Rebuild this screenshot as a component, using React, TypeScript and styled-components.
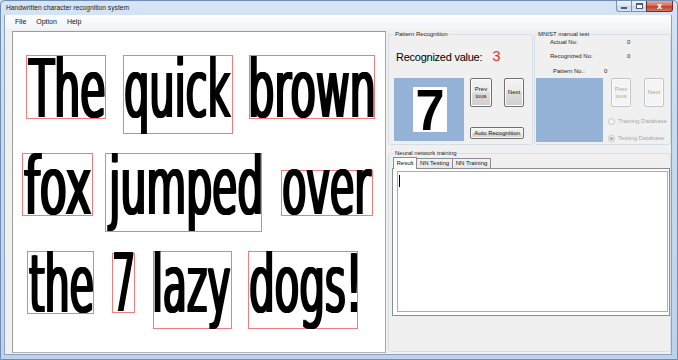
import React, { useLayoutEffect, useState } from "react";
import styled, { createGlobalStyle, css } from "styled-components";

const GlobalStyle = createGlobalStyle`
  html, body { margin: 0; padding: 0; background: #c9dbef; }
  body { font-family: "Liberation Sans", Arial, sans-serif; }
  * { box-sizing: border-box; }
`;

const Window = styled.div`
  width: 678px;
  height: 360px;
  display: flex;
  flex-direction: column;
  background: linear-gradient(180deg, #d6e4f4 0%, #c9dbef 30%, #bed2ea 100%);
  border: 1px solid #6f8db3;
  border-radius: 5px 5px 0 0;
  overflow: hidden;
`;

const TitleBar = styled.div`
  height: 14px;
  flex: none;
  display: flex;
  align-items: flex-start;
  padding-left: 5px;
`;

const TitleText = styled.span`
  font-size: 6.7px;
  line-height: 14px;
  color: #1b1b1b;
  white-space: nowrap;
`;

const Controls = styled.div`
  margin-left: auto;
  margin-right: 4px;
  display: flex;
  height: 11px;
`;

const CaptionButton = styled.div<{ $kind: "min" | "max" | "close" }>`
  height: 11px;
  display: flex;
  align-items: center;
  justify-content: center;
  border: 1px solid #8094b2;
  border-top: none;
  ${(p) =>
    p.$kind === "close"
      ? css`
          width: 27px;
          border-color: #7b2c20;
          border-radius: 0 0 3px 0;
          background: linear-gradient(180deg, #e7a79b 0%, #d27060 45%, #c0412c 55%, #d07a62 100%);
          color: #fff;
          font: bold 8px/9px "DejaVu Sans", sans-serif;
        `
      : css`
          width: 15px;
          border-right: none;
          border-radius: ${p.$kind === "min" ? "0 0 0 3px" : "0"};
          background: linear-gradient(180deg, #eef3f9 0%, #dbe5f1 45%, #c9d8ea 55%, #d8e4f1 100%);
        `}
`;

const MinGlyph = styled.span`
  width: 6px;
  height: 2px;
  margin-top: 4px;
  background: #fff;
  border: 1px solid #4b5d78;
`;

const MaxGlyph = styled.span`
  width: 7px;
  height: 6px;
  border: 1px solid #4b5d78;
  border-top-width: 2px;
  background: #fff;
`;

const Client = styled.div`
  margin: 0 5px 0 3px;
  height: 340px;
  flex: none;
  background: #f0f0f0;
  border: 1px solid #8aa1bf;
  border-top: none;
  display: flex;
  flex-direction: column;
`;

const MenuBar = styled.div`
  height: 14px;
  flex: none;
  display: flex;
  align-items: center;
  padding-left: 5px;
  background: linear-gradient(180deg, #fcfdfe 0%, #f1f4f9 100%);
`;

const MenuItem = styled.span`
  padding: 0 5px;
  font-size: 7px;
  line-height: 14px;
  color: #111;
`;

const Body = styled.div`
  flex: 1;
  display: flex;
  padding: 2px 0 0 7px;
`;

const Canvas = styled.div`
  position: relative;
  width: 374px;
  height: 322px;
  flex: none;
  background: #fff;
  border: 1px solid #9c9c9c;
  border-right-color: #a8a8a8;
  border-bottom-color: #b4b4b4;
`;

const WordBox = styled.div<{ $x: number; $y: number; $w: number; $h: number }>`
  position: absolute;
  left: ${(p) => p.$x}px;
  top: ${(p) => p.$y}px;
  width: ${(p) => p.$w}px;
  height: ${(p) => p.$h}px;
  border: 1px solid #f07c7c;
`;

const GLYPH = 80;
const GLYPH_FONT = `${GLYPH}px "DejaVu Sans"`;
const THICKEN = 4.5;

const WordText = styled.span`
  position: absolute;
  left: 0;
  top: 0;
  font-family: "DejaVu Sans", sans-serif;
  font-size: ${GLYPH}px;
  line-height: ${GLYPH}px;
  color: #000;
  white-space: nowrap;
  transform-origin: 0 0;
  text-shadow: 1.5px 0 0 #000, 3px 0 0 #000, ${THICKEN}px 0 0 #000;
`;

type WordSpec = { text: string; x0: number; y0: number; x1: number; y1: number; base: number };

const WORDS: WordSpec[] = [
  { text: "The", x0: 26, y0: 55, x1: 105, y1: 118, base: 117 },
  { text: "quick", x0: 123, y0: 55, x1: 232, y1: 133, base: 117 },
  { text: "brown", x0: 249, y0: 55, x1: 374, y1: 118, base: 117 },
  { text: "fox", x0: 22, y0: 153, x1: 92, y1: 215, base: 214 },
  { text: "jumped", x0: 105, y0: 153, x1: 261, y1: 231, base: 214 },
  { text: "over", x0: 281, y0: 170, x1: 372, y1: 215, base: 214 },
  { text: "the", x0: 27, y0: 251, x1: 93, y1: 313, base: 312 },
  { text: "7", x0: 112, y0: 253, x1: 134, y1: 312, base: 311 },
  { text: "lazy", x0: 153, y0: 251, x1: 231, y1: 328, base: 312 },
  { text: "dogs!", x0: 248, y0: 251, x1: 357, y1: 328, base: 312 },
];

const CANVAS_X = 13;
const CANVAS_Y = 32;

type Fit = { left: number; top: number; scale: number };

function measureFit(spec: WordSpec): Fit {
  const innerW = spec.x1 - spec.x0 - 1;
  const innerBase = spec.base - spec.y0 - 1;
  let inkL = 0.03 * GLYPH;
  let inkW = 0.62 * GLYPH * spec.text.length;
  let fa = 0.928 * GLYPH;
  let fd = 0.236 * GLYPH;
  const ctx = document.createElement("canvas").getContext("2d");
  if (ctx) {
    ctx.font = GLYPH_FONT;
    const m = ctx.measureText(spec.text);
    inkL = -m.actualBoundingBoxLeft;
    inkW = m.actualBoundingBoxRight + m.actualBoundingBoxLeft;
    if (m.fontBoundingBoxAscent) {
      fa = m.fontBoundingBoxAscent;
      fd = m.fontBoundingBoxDescent;
    }
  }
  const scale = (innerW - 1) / (inkW + THICKEN);
  const baseInLine = (GLYPH - (fa + fd)) / 2 + fa;
  return { scale, left: 0.5 - inkL * scale, top: innerBase - baseInLine };
}

function CanvasWord({ spec }: { spec: WordSpec }) {
  const [fit, setFit] = useState<Fit | null>(null);
  useLayoutEffect(() => {
    const run = () => setFit(measureFit(spec));
    run();
    if (document.fonts) document.fonts.ready.then(run);
  }, [spec]);
  return (
    <WordBox
      $x={spec.x0 - CANVAS_X}
      $y={spec.y0 - CANVAS_Y}
      $w={spec.x1 - spec.x0 + 1}
      $h={spec.y1 - spec.y0 + 1}
    >
      {fit && (
        <WordText style={{ left: fit.left, top: fit.top, transform: `scaleX(${fit.scale})` }}>
          {spec.text}
        </WordText>
      )}
    </WordBox>
  );
}

const Side = styled.div`
  margin-left: 1px;
  width: 284px;
  display: flex;
  flex-direction: column;
`;

const TopRow = styled.div`
  height: 114px;
  flex: none;
  display: flex;
  align-items: flex-start;
`;

const Group = styled.div<{ $w: number; $h: number; $mt: number }>`
  position: relative;
  flex: none;
  width: ${(p) => p.$w}px;
  height: ${(p) => p.$h}px;
  margin: ${(p) => p.$mt}px 0 0 1px;
  border: 1px solid #d5dfe5;
  border-radius: 3px;
  display: flex;
  flex-direction: column;
`;

const GroupTitle = styled.span<{ $left: number }>`
  position: absolute;
  top: -4px;
  left: ${(p) => p.$left}px;
  padding: 0 1px;
  background: #f0f0f0;
  font-size: 6px;
  line-height: 7px;
  color: #1e1e1e;
  white-space: nowrap;
`;

const ValueRow = styled.div`
  display: flex;
  align-items: baseline;
  height: 14px;
  margin-top: 14px;
  padding-left: 7px;
`;

const ValueLabel = styled.span`
  font-size: 11px;
  line-height: 14px;
  letter-spacing: -0.25px;
  color: #000;
`;

const ValueDigit = styled.span`
  margin-left: 10px;
  font-size: 15px;
  line-height: 14px;
  color: #e5342f;
`;

const ImageRow = styled.div<{ $mt: number; $pl: number }>`
  display: flex;
  align-items: flex-start;
  margin-top: ${(p) => p.$mt}px;
  padding-left: ${(p) => p.$pl}px;
`;

const DigitFrame = styled.div<{ $w: number; $h: number }>`
  width: ${(p) => p.$w}px;
  height: ${(p) => p.$h}px;
  flex: none;
  background: #95b3d7;
  padding: 9px 0 0 19px;
`;

const DigitPaper = styled.div`
  width: 34px;
  height: 45px;
  background: #fff;
  display: flex;
  justify-content: center;
`;

const DigitGlyph = styled.span`
  font-family: "Liberation Sans", Arial, sans-serif;
  font-weight: bold;
  font-size: 58px;
  line-height: 45px;
  color: #000;
  transform: scaleX(0.9);
`;

const ButtonCol = styled.div<{ $ml: number }>`
  display: flex;
  flex-direction: column;
  align-items: flex-start;
  margin-left: ${(p) => p.$ml}px;
`;

const ButtonPair = styled.div<{ $gap: number; $pl?: number }>`
  display: flex;
  gap: ${(p) => p.$gap}px;
  padding-left: ${(p) => p.$pl || 0}px;
`;

const PushButton = styled.div<{ $w: number; $h: number; $mt?: number; $disabled?: boolean }>`
  width: ${(p) => p.$w}px;
  height: ${(p) => p.$h}px;
  margin-top: ${(p) => p.$mt || 0}px;
  display: flex;
  align-items: center;
  justify-content: center;
  text-align: center;
  font-size: 6px;
  line-height: 7px;
  border-radius: 2px;
  white-space: nowrap;
  ${(p) =>
    p.$disabled
      ? css`
          border: 1px solid #c2c6c9;
          background: #f4f4f4;
          color: #a7a7a7;
          box-shadow: inset 0 0 0 1px #fbfbfb;
        `
      : css`
          border: 1px solid #707070;
          background: linear-gradient(180deg, #f3f3f3 0%, #ebebeb 48%, #dddddd 52%, #cfcfcf 100%);
          color: #111;
          box-shadow: inset 0 0 0 1px #fcfcfc;
        `}
`;

const StatRow = styled.div<{ $mt: number; $pl: number; $lw: number }>`
  display: flex;
  height: 8px;
  margin-top: ${(p) => p.$mt}px;
  padding-left: ${(p) => p.$pl}px;
  font-size: 6px;
  line-height: 8px;
  color: #1e1e1e;
  & > span:first-child {
    width: ${(p) => p.$lw}px;
    flex: none;
  }
`;

const BlueBox = styled.div`
  width: 67px;
  height: 64px;
  flex: none;
  background: #95b3d7;
`;

const RadioRow = styled.div<{ $mt: number }>`
  display: flex;
  align-items: center;
  gap: 3px;
  height: 8px;
  margin-top: ${(p) => p.$mt}px;
  font-size: 6px;
  line-height: 8px;
  color: #a8a8a8;
  white-space: nowrap;
`;

const RadioDot = styled.span<{ $checked?: boolean }>`
  width: 7px;
  height: 7px;
  flex: none;
  border-radius: 50%;
  border: 1px solid #c4c4c4;
  background: #f4f4f4;
  display: flex;
  align-items: center;
  justify-content: center;
  &::after {
    content: "";
    width: 3px;
    height: 3px;
    border-radius: 50%;
    background: ${(p) => (p.$checked ? "#a9a9a9" : "transparent")};
  }
`;

const TabStrip = styled.div`
  display: flex;
  align-items: flex-end;
  height: 10px;
  margin: 4px 0 0 4px;
`;

const Tab = styled.div<{ $w: number; $active?: boolean }>`
  position: relative;
  width: ${(p) => p.$w}px;
  margin-right: -1px;
  text-align: center;
  font-size: 6px;
  color: #111;
  border: 1px solid #898c95;
  border-bottom: none;
  ${(p) =>
    p.$active
      ? css`
          z-index: 1;
          height: 12px;
          line-height: 11px;
          margin-bottom: -1px;
          background: #fff;
        `
      : css`
          height: 10px;
          line-height: 9px;
          background: linear-gradient(180deg, #f3f3f3 0%, #e6e6e6 100%);
        `}
`;

const TabPage = styled.div`
  width: 278px;
  height: 148px;
  margin-left: 3px;
  border: 1px solid #898c95;
  background: #fff;
  padding: 2px 1px 3px 4px;
  display: flex;
`;

const TextBox = styled.div`
  flex: 1;
  border: 1px solid #abadb3;
  background: #fff;
  padding: 3px 0 0 1px;
`;

const Caret = styled.span`
  display: block;
  width: 1px;
  height: 12px;
  background: #000;
`;

export default function App() {
  return (
    <>
      <GlobalStyle />
      <Window>
        <TitleBar>
          <TitleText>Handwritten character recognition system</TitleText>
          <Controls>
            <CaptionButton $kind="min">
              <MinGlyph />
            </CaptionButton>
            <CaptionButton $kind="max">
              <MaxGlyph />
            </CaptionButton>
            <CaptionButton $kind="close">x</CaptionButton>
          </Controls>
        </TitleBar>
        <Client>
          <MenuBar>
            <MenuItem>File</MenuItem>
            <MenuItem>Option</MenuItem>
            <MenuItem>Help</MenuItem>
          </MenuBar>
          <Body>
            <Canvas>
              {WORDS.map((w) => (
                <CanvasWord key={w.text + w.x0} spec={w} />
              ))}
            </Canvas>
            <Side>
              <TopRow>
                <Group $w={145} $h={111} $mt={3}>
                  <GroupTitle $left={5}>Pattern Recognition</GroupTitle>
                  <ValueRow>
                    <ValueLabel>Recognized value:</ValueLabel>
                    <ValueDigit>3</ValueDigit>
                  </ValueRow>
                  <ImageRow $mt={15} $pl={5}>
                    <DigitFrame $w={70} $h={63}>
                      <DigitPaper>
                        <DigitGlyph>7</DigitGlyph>
                      </DigitPaper>
                    </DigitFrame>
                    <ButtonCol $ml={6}>
                      <ButtonPair $gap={12}>
                        <PushButton $w={22} $h={29}>
                          Prev
                          <br />
                          ious
                        </PushButton>
                        <PushButton $w={20} $h={29}>
                          Next
                        </PushButton>
                      </ButtonPair>
                      <PushButton $w={54} $h={12} $mt={20}>
                        Auto Recognition
                      </PushButton>
                    </ButtonCol>
                  </ImageRow>
                </Group>
                <Group $w={137} $h={111} $mt={3}>
                  <GroupTitle $left={2}>MNIST manual test</GroupTitle>
                  <StatRow $mt={3} $pl={15} $lw={77}>
                    <span>Actual No:</span>
                    <span>0</span>
                  </StatRow>
                  <StatRow $mt={6} $pl={15} $lw={77}>
                    <span>Recognized No:</span>
                    <span>0</span>
                  </StatRow>
                  <StatRow $mt={7} $pl={18} $lw={51}>
                    <span>Pattern No.:</span>
                    <span>0</span>
                  </StatRow>
                  <ImageRow $mt={3} $pl={1}>
                    <BlueBox />
                    <ButtonCol $ml={5}>
                      <ButtonPair $gap={13} $pl={3}>
                        <PushButton $w={20} $h={29} $disabled>
                          Prev
                          <br />
                          ious
                        </PushButton>
                        <PushButton $w={20} $h={29} $disabled>
                          Next
                        </PushButton>
                      </ButtonPair>
                      <RadioRow $mt={10}>
                        <RadioDot />
                        Training Database
                      </RadioRow>
                      <RadioRow $mt={9}>
                        <RadioDot $checked />
                        Testing Database
                      </RadioRow>
                    </ButtonCol>
                  </ImageRow>
                </Group>
              </TopRow>
              <Group $w={283} $h={199} $mt={8}>
                <GroupTitle $left={5}>Neural network training</GroupTitle>
                <TabStrip>
                  <Tab $w={24} $active>
                    Result
                  </Tab>
                  <Tab $w={37}>NN Testing</Tab>
                  <Tab $w={39}>NN Training</Tab>
                </TabStrip>
                <TabPage>
                  <TextBox>
                    <Caret />
                  </TextBox>
                </TabPage>
              </Group>
            </Side>
          </Body>
        </Client>
      </Window>
    </>
  );
}
